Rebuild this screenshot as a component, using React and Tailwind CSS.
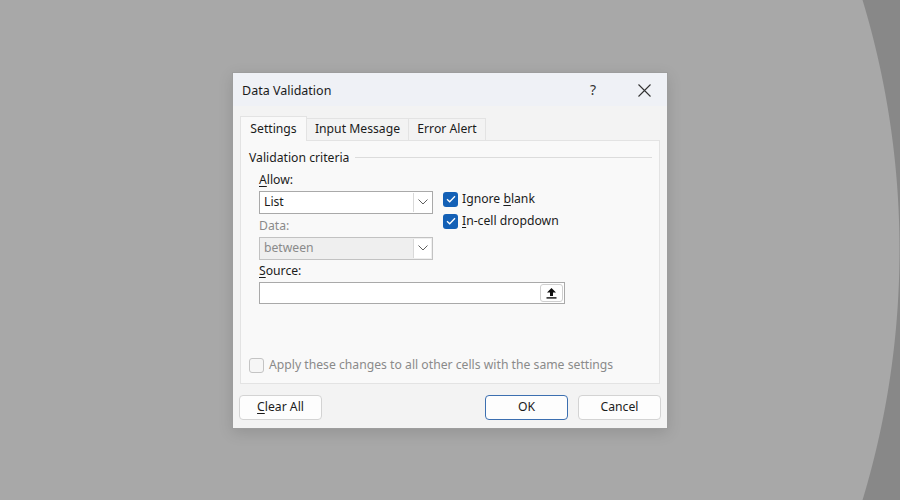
import React from "react";

const font = { fontFamily: '"Noto Sans", "Open Sans", sans-serif' };

function Check({ checked = true, disabled = false }) {
  if (!checked) {
    return (
      <span
        className={`w-[15px] h-[15px] rounded-[3px] border bg-[#f6f6f6] ${
          disabled ? "border-[#c4c4c4]" : "border-[#8a8a8a]"
        }`}
      />
    );
  }
  return (
    <span className="w-[15px] h-[15px] rounded-[3px] bg-[#1360b6] flex items-center justify-center">
      <svg width="10" height="8" viewBox="0 0 10 8" fill="none">
        <path d="M1 4.2 L3.7 6.8 L9 1.2" stroke="white" strokeWidth="1.3" />
      </svg>
    </span>
  );
}

function Chevron({ color = "#5f5f5f" }) {
  return (
    <svg width="10" height="6" viewBox="0 0 10 6" fill="none">
      <path d="M0.5 0.5 L5 5 L9.5 0.5" stroke={color} strokeWidth="1" />
    </svg>
  );
}

function Select({ value, disabled }) {
  return (
    <div
      className={`h-[23px] w-[174px] border flex items-stretch ${
        disabled ? "bg-[#efefef] border-[#c2c2c2] text-[#8a8a8a]" : "bg-white border-[#a9a9a9] text-[#1b1b1b]"
      }`}
    >
      <div className="flex-1 flex items-center pl-[4px]">{value}</div>
      <div className="w-[18px] my-px mr-px bg-white border-l border-[#d9d9d9] flex items-center justify-center">
        <Chevron />
      </div>
    </div>
  );
}

function Btn({ children, primary }) {
  return (
    <button
      className={`w-[83px] h-[25px] rounded-[4px] bg-[#fdfdfd] text-[#1b1b1b] border ${
        primary ? "border-[#3c6fb0]" : "border-[#d3d3d3]"
      }`}
    >
      {children}
    </button>
  );
}

export default function App() {
  return (
    <div
      className="w-[900px] h-[500px] flex items-center justify-center bg-[radial-gradient(circle_at_36px_250px,#a8a8a8_863px,#888888_864px)] text-[12.2px] leading-[14px]"
      style={font}
    >
      <div className="w-[436px] border border-[#9d9d9d] bg-[#f3f3f3] flex flex-col shadow-[0_4px_14px_rgba(0,0,0,0.12)]">
        {/* Title bar */}
        <div className="h-[33px] bg-[#eff1f6] flex items-center text-[#1b1b1b]">
          <div className="flex-1 pl-[9px] pt-[3px] text-[12.5px]">Data Validation</div>
          <div className="w-[46px] pt-[2px] text-center text-[14px] text-[#333]">?</div>
          <div className="w-[46px] ml-[5px] pt-[2px] flex items-center justify-center">
            <svg width="13" height="13" viewBox="0 0 13 13" fill="none">
              <path d="M0.5 0.5 L12.5 12.5 M12.5 0.5 L0.5 12.5" stroke="#333" strokeWidth="1.1" />
            </svg>
          </div>
        </div>

        <div className="px-[7px] pt-[10px] pb-[8px] flex flex-col">
          {/* Tabs */}
          <div className="flex items-end text-[#1b1b1b]">
            <div className="h-[25px] w-[67px] -mb-px relative z-10 bg-[#f9f9f9] border border-b-0 border-[#e3e3e3] flex items-center justify-center">
              Settings
            </div>
            <div className="h-[22px] w-[102px] border-t border-r border-[#e3e3e3] flex items-center justify-center">
              Input Message
            </div>
            <div className="h-[22px] w-[77px] border-t border-r border-[#e3e3e3] flex items-center justify-center">
              Error Alert
            </div>
          </div>

          {/* Panel */}
          <div className="h-[244px] bg-[#f9f9f9] border border-[#e3e3e3] flex flex-col pt-[10px] pl-[8px] pr-[7px] pb-[10px] text-[#1b1b1b]">
            <div className="flex items-center gap-[6px]">
              <span>Validation criteria</span>
              <span className="flex-1 h-px bg-[#dcdcdc]" />
            </div>

            <div className="pl-[10px] flex flex-col">
              <div className="flex">
                <div className="flex flex-col">
                  <div className="mt-[8px]">
                    <span className="underline underline-offset-2">A</span>llow:
                  </div>
                  <div className="mt-[4px]">
                    <Select value="List" />
                  </div>
                  <div className="mt-[5px] text-[#8a8a8a]">Data:</div>
                  <div className="mt-[4px]">
                    <Select value="between" disabled />
                  </div>
                </div>
                <div className="ml-[10px] mt-[27px] flex flex-col gap-[7px]">
                  <div className="flex items-center gap-[4px]">
                    <Check />
                    <span>
                      Ignore <span className="underline underline-offset-2">b</span>lank
                    </span>
                  </div>
                  <div className="flex items-center gap-[4px]">
                    <Check />
                    <span>
                      <span className="underline underline-offset-2">I</span>n-cell dropdown
                    </span>
                  </div>
                </div>
              </div>

              <div className="mt-[4px]">
                <span className="underline underline-offset-2">S</span>ource:
              </div>
              <div className="mt-[4px] w-[306px] h-[22px] bg-white border border-[#a9a9a9] flex justify-end">
                <div className="w-[23px] my-px mr-px rounded-[3px] border border-[#cfcfcf] bg-white flex items-center justify-center">
                  <svg width="11" height="12" viewBox="0 0 11 12" fill="none">
                    <path d="M5.5 1 L10 5.6 L7 5.6 L7 9 L4 9 L4 5.6 L1 5.6 Z" fill="#111" />
                    <rect x="0.5" y="10.2" width="10" height="1.4" fill="#111" />
                  </svg>
                </div>
              </div>
            </div>

            <div className="mt-auto flex items-center gap-[5px] text-[#8a8a8a]">
              <Check checked={false} disabled />
              <span>Apply these changes to all other cells with the same settings</span>
            </div>
          </div>

          {/* Buttons */}
          <div className="mt-[11px] -mx-px flex items-center">
            <Btn>
              <span className="underline underline-offset-2">C</span>lear All
            </Btn>
            <div className="flex-1" />
            <Btn primary>OK</Btn>
            <div className="w-[10px]" />
            <Btn>Cancel</Btn>
          </div>
        </div>
      </div>
    </div>
  );
}
